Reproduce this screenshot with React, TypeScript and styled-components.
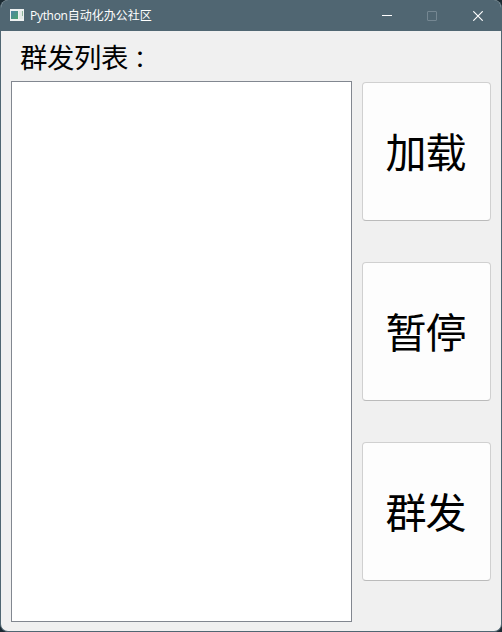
import React from "react";
import styled, { createGlobalStyle } from "styled-components";

const GlobalStyle = createGlobalStyle`
  * { box-sizing: border-box; }
  body { margin: 0; background: #1b2a32; }
`;

const Window = styled.main`
  width: 502px;
  height: 632px;
  display: flex;
  flex-direction: column;
  overflow: hidden;
  border: 1px solid #506672;
  border-top: 0;
  border-radius: 8px;
  background: #f0f0f0;
  color: #000;
  font-family: "Open Sans", "Noto Sans CJK SC", sans-serif;
`;

const TitleBar = styled.header`
  height: 31px;
  flex: none;
  display: flex;
  align-items: center;
  padding-left: 9px;
  background: #506672;
  color: #fff;
`;

const Title = styled.h1`
  flex: 1;
  margin: 0 0 0 6px;
  font-size: 12px;
  font-weight: 400;
  line-height: 31px;
  white-space: nowrap;
`;

const Latin = styled.span`
  letter-spacing: -0.3px;
`;

const CaptionButton = styled.button<{ $dim?: boolean }>`
  width: ${(p) => (p.$dim ? "44px" : "46px")};
  height: 31px;
  padding: 0;
  display: flex;
  align-items: center;
  justify-content: center;
  border: 0;
  background: transparent;
  color: ${(p) => (p.$dim ? "#758792" : "#fff")};

  &:last-child {
    width: 47px;
    padding-left: 1px;
  }
`;

const Content = styled.section`
  flex: 1;
  display: grid;
  grid-template-columns: 341px 129px;
  grid-template-rows: 50px 541px;
  column-gap: 10px;
  padding-left: 10px;
`;

const ListLabel = styled.label`
  grid-column: 1 / -1;
  padding: 7px 0 0 9px;
  font-size: 27.4px;
  letter-spacing: -0.4px;
  line-height: 40px;
  white-space: nowrap;
`;

const Colon = styled.span`
  display: inline-block;
  font-family: "Noto Sans CJK TC", sans-serif;
  font-size: 24px;
  line-height: 30px;
`;

const ListBox = styled.div`
  border: 1px solid #828790;
  background: #fff;
`;

const Actions = styled.div`
  display: flex;
  flex-direction: column;
  gap: 41px;
  padding-top: 1px;
`;

const ActionButton = styled.button`
  width: 129px;
  height: 139px;
  padding: 0 2px 4px 0;
  border: 1px solid #d0d0d0;
  border-bottom-color: #bbb;
  border-radius: 4px;
  background: #fdfdfd;
  color: #000;
  font-family: "Noto Sans CJK SC", sans-serif;
  font-size: 41px;
  letter-spacing: -1px;
  line-height: 60px;
`;

const AppIcon = styled.svg`
  width: 14px;
  height: 12px;
  flex: none;
  margin-bottom: 2px;
`;

const actions = ["加载", "暂停", "群发"];

export default function App() {
  return (
    <>
      <GlobalStyle />
      <Window lang="zh-CN">
        <TitleBar>
          <AppIcon viewBox="0 0 14 12">
            <defs>
              <linearGradient id="screen" x1="0" y1="0" x2="1" y2="1">
                <stop offset="0" stopColor="#4d83a5" />
                <stop offset="1" stopColor="#4aa36d" />
              </linearGradient>
            </defs>
            <path d="M0 0h14v12H0z" fill="#eef0f0" />
            <path d="M1 2h7v8H1z" fill="url(#screen)" />
            <path d="M9 2h4v8H9z" fill="#e3e8e6" />
            <path d="M12 2h1v5h-1z" fill="#8fb59b" />
          </AppIcon>
          <Title>
            <Latin>Python</Latin>自动化办公社区
          </Title>
          <CaptionButton aria-label="最小化">
            <svg width="10" height="11" viewBox="0 0 10 11" shapeRendering="crispEdges">
              <path d="M0 5h10v1H0z" fill="currentColor" />
            </svg>
          </CaptionButton>
          <CaptionButton aria-label="最大化" $dim disabled>
            <svg width="10" height="10" viewBox="0 0 10 10" fill="none" stroke="currentColor">
              <rect x=".5" y=".5" width="9" height="9" rx=".5" />
            </svg>
          </CaptionButton>
          <CaptionButton aria-label="关闭">
            <svg width="10" height="10" viewBox="0 0 10 10" fill="none" stroke="currentColor" strokeWidth="1.15">
              <path d="M.3.3l9.4 9.4M9.7.3.3 9.7" />
            </svg>
          </CaptionButton>
        </TitleBar>
        <Content>
          <ListLabel>
            群发列表<Colon lang="zh-TW">：</Colon>
          </ListLabel>
          <ListBox />
          <Actions>
            {actions.map((name) => (
              <ActionButton key={name}>{name}</ActionButton>
            ))}
          </Actions>
        </Content>
      </Window>
    </>
  );
}
